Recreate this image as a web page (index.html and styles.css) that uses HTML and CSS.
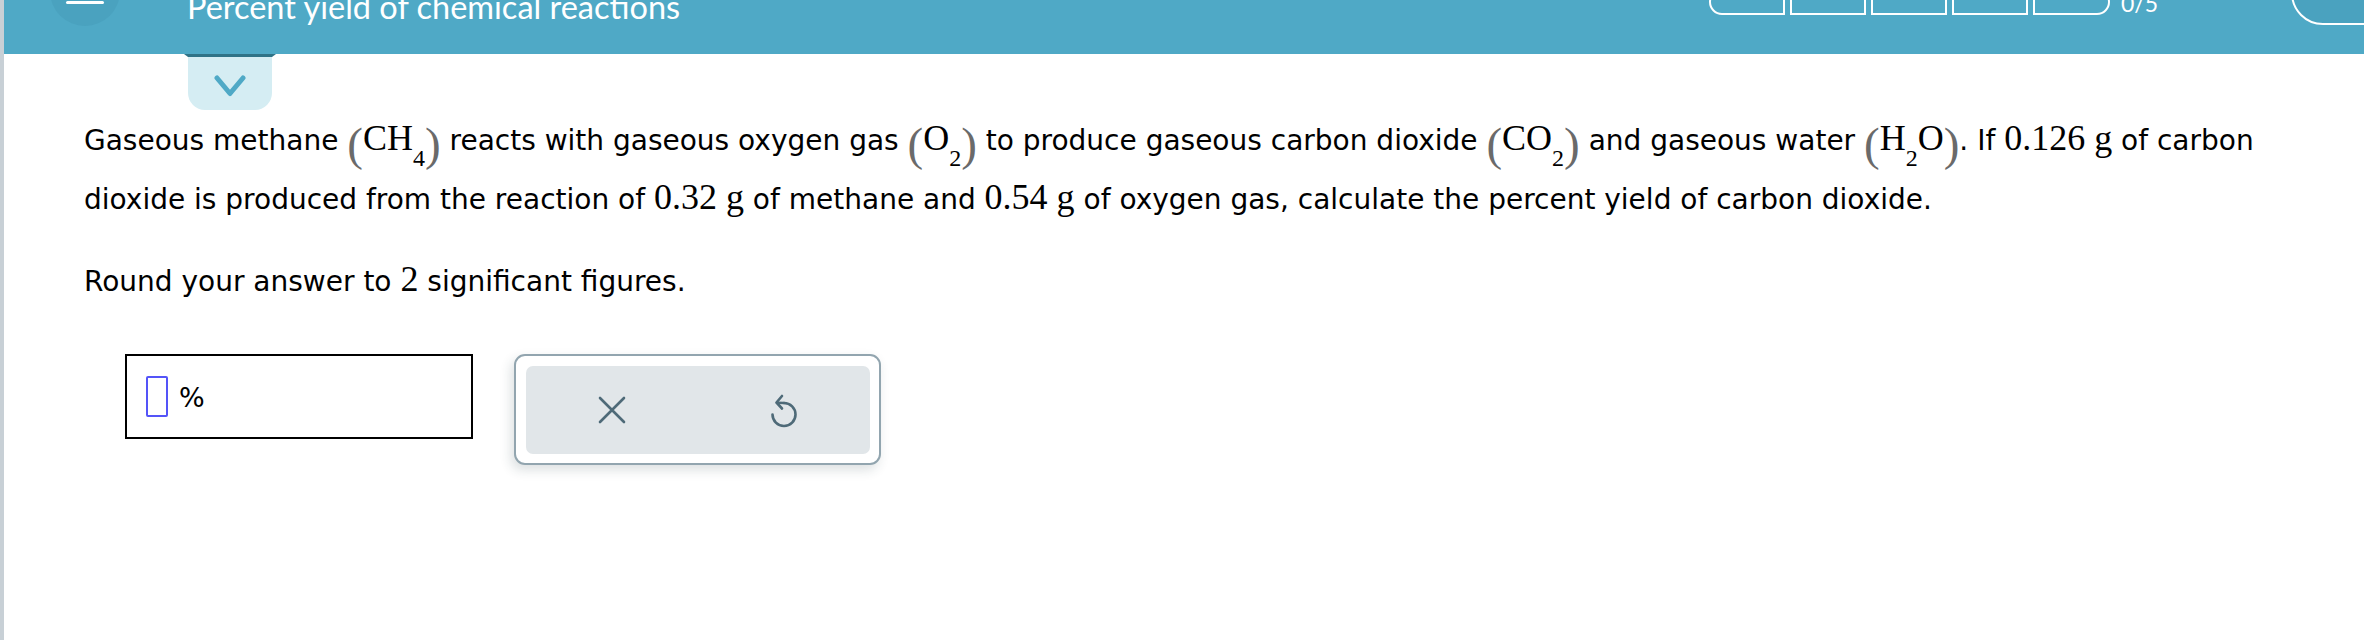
FILE: index.html
```html
<!DOCTYPE html>
<html lang="en">
<head>
<meta charset="utf-8">
<title>Percent yield of chemical reactions</title>
<link rel="stylesheet" href="styles.css">
</head>
<body>
<div class="page">
  <div class="strip"></div>
  <div class="main">
    <header class="topbar">
      <div class="menu-btn"><span></span><span></span><span></span></div>
      <div class="title">Percent yield of chemical reactions</div>
      <div class="progress">
        <div class="seg first"></div>
        <div class="seg"></div>
        <div class="seg"></div>
        <div class="seg"></div>
        <div class="seg last"></div>
        <span class="count">0/5</span>
      </div>
      <div class="pill"></div>
    </header>

    <div class="tab">
      <svg class="chev" width="32" height="22" viewBox="0 0 32 22"><polyline points="3,3 16,18.5 29,3" fill="none" stroke="#4fa9c6" stroke-width="5" stroke-linecap="round" stroke-linejoin="round"/></svg>
    </div>

    <div class="question">
      <p class="q">Gaseous methane <span class="chem"><span class="par">(</span>CH<sub>4</sub><span class="par">)</span></span> reacts with gaseous oxygen gas <span class="chem"><span class="par">(</span>O<sub>2</sub><span class="par">)</span></span> to produce gaseous carbon dioxide <span class="chem"><span class="par">(</span>CO<sub>2</sub><span class="par">)</span></span> and gaseous water <span class="chem"><span class="par">(</span>H<sub>2</sub>O<span class="par">)</span></span>. If <span class="num">0.126 g</span> of carbon dioxide is produced from the reaction of <span class="num">0.32 g</span> of methane and <span class="num">0.54 g</span> of oxygen gas, calculate the percent yield of carbon dioxide.</p>
      <p class="round">Round your answer to <span class="num">2</span> significant figures.</p>

      <div class="answer">
        <div class="input"><span class="cursor"></span><span class="pct">%</span></div>
        <div class="tools">
          <div class="tools-inner">
            <button class="tool" aria-label="Clear">
              <svg width="28" height="28" viewBox="0 0 28 28"><path d="M2 2 L26 26 M26 2 L2 26" fill="none" stroke="#4e6a78" stroke-width="2.6" stroke-linecap="round"/></svg>
            </button>
            <button class="tool" aria-label="Undo">
              <svg width="30" height="38" viewBox="0 0 30 38"><path d="M15 12 A11.5 11.5 0 1 1 3.5 23.5" fill="none" stroke="#4e6a78" stroke-width="2.6" stroke-linecap="round"/><path d="M13 5 L7.5 11.5 L13 17.5" fill="none" stroke="#4e6a78" stroke-width="2.6" stroke-linecap="round" stroke-linejoin="round"/><path d="M8 11.8 L15 12" fill="none" stroke="#4e6a78" stroke-width="2.6" stroke-linecap="round"/></svg>
            </button>
          </div>
        </div>
      </div>
    </div>
  </div>
</div>
</body>
</html>
```

FILE: styles.css
```css
html, body {
  margin: 0;
  padding: 0;
  background: #ffffff;
}

body {
  font-family: "DejaVu Sans", Verdana, sans-serif;
  color: #000;
}

.page {
  display: flex;
  min-height: 640px;
  height: 640px;
  overflow: hidden;
}

.strip {
  width: 4px;
  flex-shrink: 0;
  background: #c8d0d6;
}

.main {
  flex: 1;
  min-width: 0;
}

/* ---------- top bar ---------- */
.topbar {
  height: 54px;
  background: #4fa9c6;
  display: flex;
  align-items: flex-start;
  overflow: hidden;
}

.menu-btn {
  flex-shrink: 0;
  width: 70px;
  height: 70px;
  margin-left: 46px;
  margin-top: -44px;
  border-radius: 50%;
  background: #4aa2bf;
  display: flex;
  flex-direction: column;
  align-items: center;
  justify-content: center;
  gap: 8px;
}

.menu-btn span {
  display: block;
  width: 38px;
  height: 3px;
  border-radius: 2px;
  background: #ffffff;
}

.title {
  margin-left: 67px;
  margin-top: -9px;
  font-family: Lato, "Open Sans", sans-serif;
  font-size: 32.5px;
  line-height: 32px;
  color: #ffffff;
  white-space: nowrap;
}

.progress {
  margin-left: auto;
  display: flex;
  align-items: flex-start;
}

.seg {
  width: 76px;
  height: 26px;
  margin-top: -11px;
  margin-left: 5px;
  box-sizing: border-box;
  border: 2px solid #ffffff;
}

.seg.first {
  margin-left: 0;
  border-radius: 13px 0 0 13px;
}

.seg.last {
  width: 77px;
  border-radius: 0 13px 13px 0;
}

.count {
  margin-left: 11px;
  margin-top: -8px;
  font-family: Lato, "Open Sans", sans-serif;
  font-size: 23px;
  line-height: 23px;
  color: #ffffff;
}

.pill {
  flex-shrink: 0;
  width: 120px;
  height: 64px;
  margin-top: -39px;
  margin-left: 133px;
  margin-right: -47px;
  box-sizing: border-box;
  border: 2px solid #ffffff;
  border-radius: 32px;
  background: #4aa2bf;
}

/* ---------- tab under bar ---------- */
.tab {
  position: relative;
  width: 84px;
  height: 56px;
  margin-left: 184px;
  box-sizing: border-box;
  padding-top: 21px;
  background: #d5edf3;
  border-radius: 0 0 17px 17px;
  display: flex;
  justify-content: center;
  align-items: flex-start;
}

.tab::before {
  content: "";
  position: absolute;
  top: 0;
  left: -4px;
  width: 92px;
  height: 3px;
  background: #2f7387;
  clip-path: polygon(0 0, 100% 0, calc(100% - 4px) 100%, 4px 100%);
}

.chev {
  display: block;
}

/* ---------- question ---------- */
.question {
  padding: 0 20px 0 80px;
}

.q {
  margin: 1px 0 0 0;
  font-size: 28px;
  line-height: 59px;
}

.round {
  margin: 23px 0 0 0;
  font-size: 28px;
  line-height: 59px;
}

.chem {
  font-family: "Liberation Serif", "Times New Roman", serif;
  font-size: 36px;
  line-height: 0;
  white-space: nowrap;
}

.chem sub {
  font-size: 24px;
  line-height: 0;
  vertical-align: -16px;
}

.par {
  font-size: 47px;
  line-height: 0;
  color: #6a6a6a;
  vertical-align: -10px;
}

.num {
  font-family: "Liberation Serif", "Times New Roman", serif;
  font-size: 36px;
  line-height: 0;
}

/* ---------- answer ---------- */
.answer {
  display: flex;
  align-items: flex-start;
  gap: 41px;
  margin-top: 43px;
  margin-left: 41px;
}

.input {
  width: 348px;
  height: 85px;
  box-sizing: border-box;
  border: 2px solid #000;
  padding: 20px 19px;
  display: flex;
  align-items: flex-start;
  gap: 11px;
}

.cursor {
  width: 22px;
  height: 41px;
  box-sizing: border-box;
  border: 2px solid #5454f8;
  border-radius: 2px;
}

.pct {
  margin-top: 8px;
  font-size: 27px;
  line-height: 27px;
}

.tools {
  width: 367px;
  height: 111px;
  box-sizing: border-box;
  border: 2px solid #92a5af;
  border-radius: 11px;
  padding: 10px 9px 9px 10px;
  background: #ffffff;
  box-shadow: -3px 5px 12px rgba(40, 60, 70, 0.16);
}

.tools-inner {
  height: 100%;
  border-radius: 7px;
  background: #e1e6e9;
  display: flex;
}

.tool {
  flex: 1;
  border: 0;
  padding: 0;
  margin: 0;
  background: transparent;
  display: flex;
  align-items: center;
  justify-content: center;
}

.tool svg {
  display: block;
}
```
